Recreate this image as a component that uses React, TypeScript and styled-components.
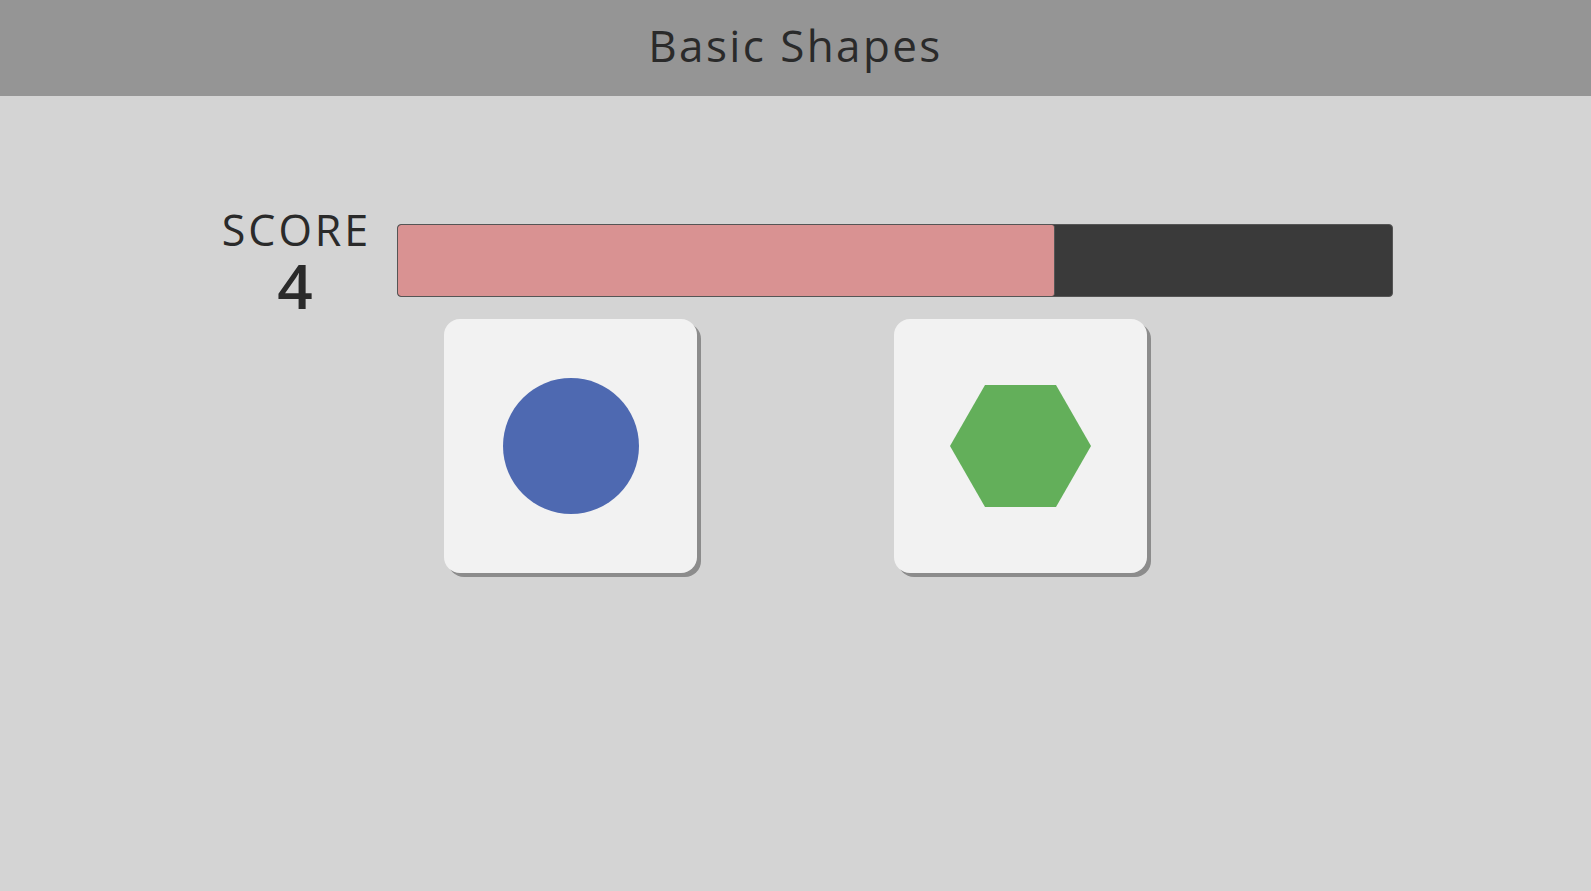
import styled, { createGlobalStyle } from "styled-components";

const GlobalStyle = createGlobalStyle`
  html, body {
    margin: 0;
    padding: 0;
    background: #d4d4d4;
    font-family: "Open Sans", "Liberation Sans", sans-serif;
  }
`;

const Page = styled.div`
  min-height: 891px;
  background: #d4d4d4;
`;

const Header = styled.header`
  height: 96px;
  box-sizing: border-box;
  padding-bottom: 6px;
  background: #959595;
  display: flex;
  align-items: center;
  justify-content: center;
`;

const Title = styled.h1`
  margin: 0;
  font-size: 44px;
  font-weight: 400;
  letter-spacing: 2.4px;
  color: #2a2a2a;
`;

const Main = styled.main`
  padding-top: 128px;
`;

const ScoreRow = styled.div`
  display: flex;
  align-items: center;
  height: 73px;
  padding-left: 215px;
  gap: 22px;
`;

const ScoreBox = styled.div`
  width: 160px;
  display: flex;
  flex-direction: column;
  align-items: center;
  gap: 4px;
  color: #2a2a2a;
`;

const ScoreLabel = styled.div`
  font-size: 43px;
  line-height: 44px;
  letter-spacing: 3px;
  padding-left: 3px;
`;

const ScoreValue = styled.div`
  font-size: 62px;
  line-height: 58px;
  font-weight: 600;
`;

const Bar = styled.div`
  width: 996px;
  height: 73px;
  box-sizing: border-box;
  background: #3a3a3a;
  border: 1px solid #555;
  border-radius: 4px;
  overflow: hidden;
  display: flex;
`;

const BarFill = styled.div`
  height: 100%;
  background: #d99292;
  border-right: 1px solid #555;
  border-radius: 3px;
`;

const CardRow = styled.div`
  display: flex;
  gap: 197px;
  padding-left: 444px;
  margin-top: 22px;
`;

const Card = styled.div`
  width: 253px;
  height: 254px;
  background: #f2f2f2;
  border-radius: 16px;
  box-shadow: 4px 4px 0 #8c8c8c;
  display: flex;
  align-items: center;
  justify-content: center;
`;

const Circle = styled.div`
  width: 136px;
  height: 136px;
  border-radius: 50%;
  background: #4e69b1;
`;

const Hexagon = () => (
  <svg width="141" height="122" viewBox="0 0 141 122">
    <polygon points="35,0 106,0 141,61 106,122 35,122 0,61" fill="#63af5a" />
  </svg>
);

export default function App() {
  const progress = 0.66;
  return (
    <Page>
      <GlobalStyle />
      <Header>
        <Title>Basic Shapes</Title>
      </Header>
      <Main>
        <ScoreRow>
          <ScoreBox>
            <ScoreLabel>SCORE</ScoreLabel>
            <ScoreValue>4</ScoreValue>
          </ScoreBox>
          <Bar>
            <BarFill style={{ width: `${progress * 100}%` }} />
          </Bar>
        </ScoreRow>
        <CardRow>
          <Card>
            <Circle />
          </Card>
          <Card>
            <Hexagon />
          </Card>
        </CardRow>
      </Main>
    </Page>
  );
}
